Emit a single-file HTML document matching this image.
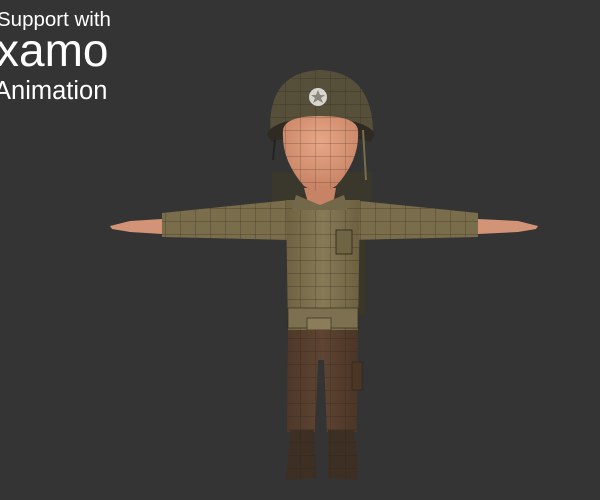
<!DOCTYPE html>
<html><head><style>
html,body{margin:0;padding:0;width:600px;height:500px;overflow:hidden;background:#343434;}
.t{position:absolute;color:#fff;font-family:"Liberation Sans",sans-serif;white-space:nowrap;line-height:1;}
</style></head><body>
<div class="t" style="left:-3px;top:10px;font-size:20.5px;">Support with</div>
<div class="t" style="left:-4px;top:27px;font-size:46px;">xamo</div>
<div class="t" style="left:-6px;top:79px;font-size:25.5px;">Animation</div>
<svg width="600" height="500" style="position:absolute;left:0;top:0">
<defs>
<pattern id="g" width="15" height="13" patternUnits="userSpaceOnUse"><path d="M0 0H15M0 0V13" stroke="#2a2414" stroke-width="0.7" fill="none" opacity="0.7"/></pattern>
<linearGradient id="shirt" x1="0" x2="1"><stop offset="0" stop-color="#6e6242"/><stop offset="0.5" stop-color="#877a57"/><stop offset="1" stop-color="#6c6040"/></linearGradient>
<linearGradient id="pants" x1="0" x2="1"><stop offset="0" stop-color="#4e3829"/><stop offset="0.5" stop-color="#5e4432"/><stop offset="1" stop-color="#4a3526"/></linearGradient>
<radialGradient id="face" cx="0.5" cy="0.35" r="0.6"><stop offset="0" stop-color="#e7a888"/><stop offset="1" stop-color="#c98466"/></radialGradient>
</defs>
<!-- backpack -->
<rect x="272" y="172" width="100" height="42" fill="#3a382c"/>
<rect x="354" y="214" width="12" height="100" fill="#3a3628"/>
<!-- arms -->
<path d="M162 213 L290 200 L350 200 L478 213 L478 237 L350 240 L290 240 L162 237 Z" fill="#7a6d4b"/>
<path d="M162 213 L290 200 L350 200 L478 213 L478 237 L350 240 L290 240 L162 237 Z" fill="url(#g)"/>
<path d="M110 226 L130 221 L162 219 L162 234 L130 232 L112 229Z" fill="#d39377"/>
<path d="M538 226 L518 221 L478 219 L478 234 L518 232 L536 229Z" fill="#d39377"/>
<!-- torso -->
<path d="M286 200 L360 200 L358 330 L288 330 Z" fill="url(#shirt)"/>
<path d="M286 200 L360 200 L358 330 L288 330 Z" fill="url(#g)"/>
<rect x="336" y="230" width="16" height="24" fill="#6f6444" stroke="#2a2414" stroke-width="0.8"/>
<rect x="288" y="308" width="70" height="20" fill="#7c7050" stroke="#2a2414" stroke-width="0.6"/>
<rect x="307" y="318" width="24" height="12" fill="#8a7d5a" stroke="#2a2414" stroke-width="0.6"/>
<!-- neck/collar -->
<path d="M304 188 L336 188 L332 210 L310 210Z" fill="#c78366"/>
<path d="M296 195 L320 205 L344 195 L348 210 L320 210 L292 210Z" fill="#74684a"/>
<!-- pants -->
<path d="M288 330 L358 330 L357 432 L327 432 L324 360 L318 360 L315 432 L287 432Z" fill="url(#pants)"/>
<path d="M288 330 L358 330 L357 432 L327 432 L324 360 L318 360 L315 432 L287 432Z" fill="url(#g)"/>
<rect x="352" y="362" width="10" height="28" fill="#4a3526" stroke="#2a2414" stroke-width="0.6"/>
<!-- boots -->
<path d="M290 430 L314 430 L316 478 L286 480 L288 460Z" fill="#3d2f24"/>
<path d="M328 430 L354 430 L358 460 L357 480 L328 478Z" fill="#3d2f24"/>
<path d="M290 430 L314 430 L316 478 L286 480 L288 460Z M328 430 L354 430 L358 460 L357 480 L328 478Z" fill="url(#g)"/>
<!-- helmet -->
<path d="M270 132 Q268 72 320 70 Q372 72 373 132 Q360 122 320 120 Q282 122 270 132Z" fill="#56503b"/>
<path d="M270 132 Q268 72 320 70 Q372 72 373 132 Q360 122 320 120 Q282 122 270 132Z" fill="url(#g)"/>
<path d="M267 135 Q270 120 320 117 Q370 120 375 135 L370 142 Q320 125 272 142Z" fill="#2f2b22"/>
<circle cx="318" cy="97" r="9" fill="#d8d6d0"/>
<path d="M318 90 L320 95 L325 95 L321 98 L323 103 L318 100 L313 103 L315 98 L311 95 L316 95Z" fill="#8a8678"/>
<line x1="363" y1="130" x2="366" y2="180" stroke="#7a6d4b" stroke-width="2"/>
<line x1="275" y1="140" x2="273" y2="160" stroke="#222" stroke-width="2"/>
<!-- face -->
<path d="M283 130 Q285 116 320 116 Q356 116 358 130 Q360 160 336 186 Q320 196 304 186 Q281 160 283 130Z" fill="url(#face)"/>
<path d="M283 130 Q285 116 320 116 Q356 116 358 130 Q360 160 336 186 Q320 196 304 186 Q281 160 283 130Z" fill="url(#g)" opacity="0.8"/>
</svg>
</body></html>
